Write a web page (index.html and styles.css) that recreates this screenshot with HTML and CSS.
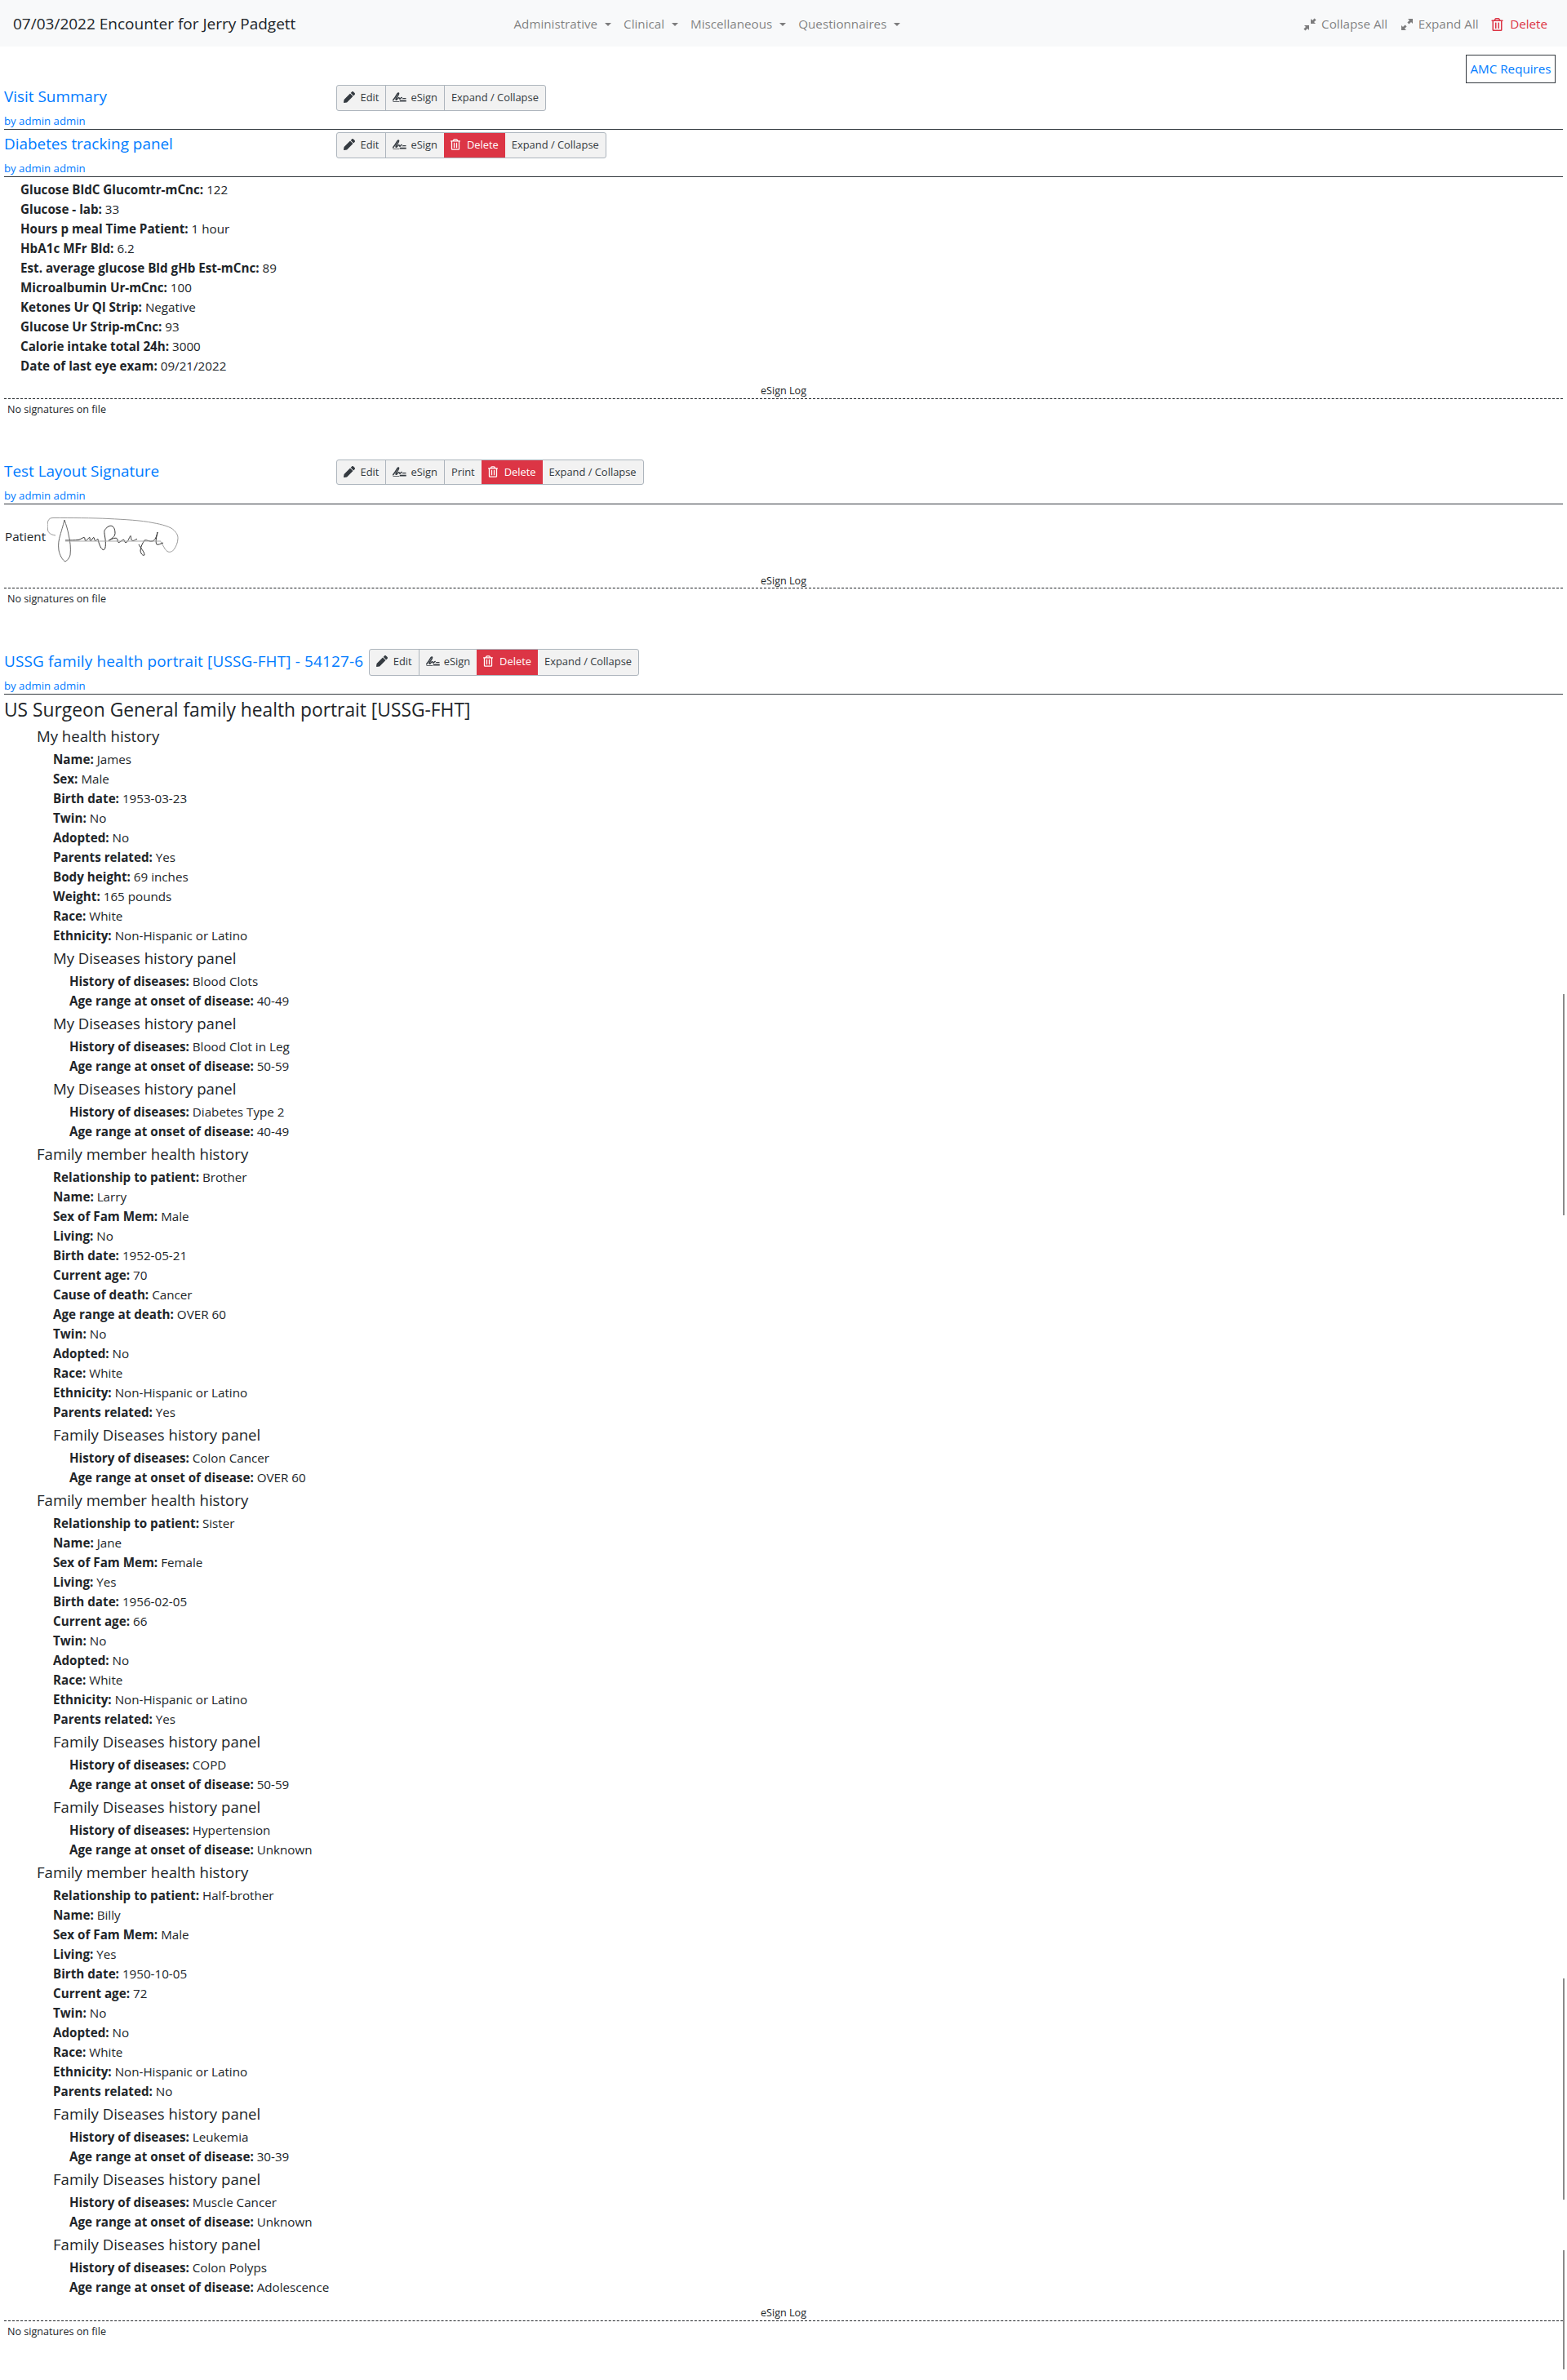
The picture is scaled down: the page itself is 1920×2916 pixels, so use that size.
FILE: index.html
```html
<!DOCTYPE html>
<html lang="en">
<head>
<meta charset="utf-8">
<title>Encounter</title>
<link rel="stylesheet" href="styles.css">
</head>
<body>
<svg class="defs" width="0" height="0">
<symbol id="i-pencil" viewBox="0 0 512 512"><path d="M497.9 142.1l-46.1 46.1c-4.7 4.7-12.3 4.7-17 0l-111-111c-4.7-4.7-4.7-12.3 0-17l46.1-46.1c18.7-18.7 49.1-18.7 67.9 0l60.1 60.1c18.8 18.7 18.8 49.1 0 67.9zM284.2 99.8L21.6 362.4.4 483.9c-2.9 16.4 11.4 30.6 27.8 27.8l121.5-21.3 262.6-262.6c4.7-4.7 4.7-12.3 0-17l-111-111c-4.8-4.7-12.4-4.7-17.1 0z"/></symbol>
<symbol id="i-trash" viewBox="0 0 448 512"><path d="M268 416h24a12 12 0 0 0 12-12V188a12 12 0 0 0-12-12h-24a12 12 0 0 0-12 12v216a12 12 0 0 0 12 12zM432 80h-82.41l-34-56.7A48 48 0 0 0 274.41 0H173.59a48 48 0 0 0-41.16 23.3L98.41 80H16A16 16 0 0 0 0 96v16a16 16 0 0 0 16 16h16v336a48 48 0 0 0 48 48h288a48 48 0 0 0 48-48V128h16a16 16 0 0 0 16-16V96a16 16 0 0 0-16-16zM171.84 50.91A6 6 0 0 1 177 48h94a6 6 0 0 1 5.15 2.91L293.61 80H154.39zM368 464H80V128h288zm-212-48h24a12 12 0 0 0 12-12V188a12 12 0 0 0-12-12h-24a12 12 0 0 0-12 12v216a12 12 0 0 0 12 12z"/></symbol>
<symbol id="i-sign" viewBox="0 0 640 512"><path fill="none" stroke="currentColor" stroke-width="56" stroke-linecap="round" stroke-linejoin="round" d="M24 400C70 340 170 190 210 120c24-42 64-70 74-40 10 34-60 150-112 220-22 32-28 90 4 80 40-14 60-90 110-100 36-6 16 60 46 60 36 0 50-70 90-70"/><path d="M330 400h300v60H330zM20 452h290v32H20z"/><path d="M420 340l60-50 140 0v50z"/></symbol>
<symbol id="i-compress" viewBox="0 0 16 16"><path d="M1 9h6v6L5 13l-2.6 2.6L.4 13.6 3 11zM15 7H9V1l2 2L13.6.4l2 2L13 5z"/></symbol>
<symbol id="i-expand" viewBox="0 0 16 16"><path d="M1 9v6h6L5 13l2.6-2.6-2-2L3 11zM15 7V1H9l2 2L8.4 5.6l2 2L13 5z"/></symbol>
</svg>

<nav class="navbar">
  <span class="brand">07/03/2022 Encounter for Jerry Padgett</span>
  <ul class="menu">
    <li class="menu-item">Administrative<i class="caret"></i></li>
    <li class="menu-item">Clinical<i class="caret"></i></li>
    <li class="menu-item">Miscellaneous<i class="caret"></i></li>
    <li class="menu-item">Questionnaires<i class="caret"></i></li>
  </ul>
  <ul class="actions">
    <li class="action"><svg class="ic"><use href="#i-compress"/></svg>Collapse All</li>
    <li class="action"><svg class="ic"><use href="#i-expand"/></svg>Expand All</li>
    <li class="action action-danger"><svg class="ic ic-trash"><use href="#i-trash"/></svg>Delete</li>
  </ul>
</nav>

<main class="page">
  <div class="amc-row"><a class="amc">AMC Requires</a></div>

  <section class="form form-first">
    <header class="form-head">
      <a class="form-title">Visit Summary</a>
      <div class="btn-group">
        <span class="btn"><svg class="ic ic-pencil"><use href="#i-pencil"/></svg>Edit</span>
        <span class="btn"><svg class="ic ic-sign"><use href="#i-sign"/></svg>eSign</span>
        <span class="btn">Expand / Collapse</span>
      </div>
    </header>
    <a class="by">by admin admin</a>
    <hr class="rule">
  </section>

  <section class="form">
    <header class="form-head">
      <a class="form-title">Diabetes tracking panel</a>
      <div class="btn-group">
        <span class="btn"><svg class="ic ic-pencil"><use href="#i-pencil"/></svg>Edit</span>
        <span class="btn"><svg class="ic ic-sign"><use href="#i-sign"/></svg>eSign</span>
        <span class="btn btn-danger"><svg class="ic ic-trash"><use href="#i-trash"/></svg>Delete</span>
        <span class="btn">Expand / Collapse</span>
      </div>
    </header>
    <a class="by">by admin admin</a>
    <hr class="rule">
    <div class="lvl">
      <p class="row"><b>Glucose BldC Glucomtr-mCnc:</b> 122</p>
      <p class="row"><b>Glucose - lab:</b> 33</p>
      <p class="row"><b>Hours p meal Time Patient:</b> 1 hour</p>
      <p class="row"><b>HbA1c MFr Bld:</b> 6.2</p>
      <p class="row"><b>Est. average glucose Bld gHb Est-mCnc:</b> 89</p>
      <p class="row"><b>Microalbumin Ur-mCnc:</b> 100</p>
      <p class="row"><b>Ketones Ur Ql Strip:</b> Negative</p>
      <p class="row"><b>Glucose Ur Strip-mCnc:</b> 93</p>
      <p class="row"><b>Calorie intake total 24h:</b> 3000</p>
      <p class="row"><b>Date of last eye exam:</b> 09/21/2022</p>
    </div>
    <div class="esign"><span class="esign-label">eSign Log</span><div class="esign-none">No signatures on file</div></div>
  </section>

  <section class="form form-gap">
    <header class="form-head">
      <a class="form-title">Test Layout Signature</a>
      <div class="btn-group">
        <span class="btn"><svg class="ic ic-pencil"><use href="#i-pencil"/></svg>Edit</span>
        <span class="btn"><svg class="ic ic-sign"><use href="#i-sign"/></svg>eSign</span>
        <span class="btn">Print</span>
        <span class="btn btn-danger"><svg class="ic ic-trash"><use href="#i-trash"/></svg>Delete</span>
        <span class="btn">Expand / Collapse</span>
      </div>
    </header>
    <a class="by">by admin admin</a>
    <hr class="rule">
    <div class="sig-row">
      <span class="sig-label">Patient</span>
      <svg class="sig" viewBox="0 0 161 55" fill="none" stroke="#333" stroke-width="1">
        <path stroke="#999" d="M10 22C4 21 1 19 0.5 15 0 10 0 6 1 4 2 1.5 4 .5 7 .5c22 0 48 0 68 1 20 1 40 2 54 5 12 2 22 5 26 9 4 4 5 7 5 10 0 6-3 11-5 14-2 2-5 4-8 2-3-2-5-7-8-12"/>
        <path stroke="#666" d="M21 3c-2 8-4 14-5 18-2 6-3 12-2 19 1 6 5 13 8 14 2-1 5-4 6-8 1-8 0-17-2-25-1-6-3-12-5-18"/>
        <path d="M22 28c6 0 12 0 16-.5 3-.5 5-3 7-3 2 0 0 4 2 4 2 0 3-4 5-4 1 0-1 4 1 4s2-4 4-4c1 0 0 4 2 4 1 0 2-2 3-2 1 5 3 11 6 13 3 1 4-4 3-13-1-7-2-10 0-12 2-3 6-5 8-4 3 1 4 5 4 9 0 4-5 7-8 9 3-2 8-4 10-3 2 1 0 4 2 5 3 0 5-4 7-3 1 1 0 3 2 3 3 0 4-6 6-8 1 2 0 6 3 6 2 0 3-2 5-2"/>
        <path d="M112 33c2 4 7 9 7 13-1 1-4 0-5-5 0-5 3-10 5-13 3-1 6 2 10 1 3-1 5-6 6-11-1 5-3 12-1 15 2 1 5-1 8-2"/>
        <path stroke="#aaa" d="M22 29h117"/>
      </svg>
    </div>
    <div class="esign"><span class="esign-label">eSign Log</span><div class="esign-none">No signatures on file</div></div>
  </section>

  <section class="form form-gap form-tall">
    <header class="form-head">
      <a class="form-title">USSG family health portrait [USSG-FHT] - 54127-6</a>
      <div class="btn-group">
        <span class="btn"><svg class="ic ic-pencil"><use href="#i-pencil"/></svg>Edit</span>
        <span class="btn"><svg class="ic ic-sign"><use href="#i-sign"/></svg>eSign</span>
        <span class="btn btn-danger"><svg class="ic ic-trash"><use href="#i-trash"/></svg>Delete</span>
        <span class="btn">Expand / Collapse</span>
      </div>
    </header>
    <a class="by">by admin admin</a>
    <hr class="rule">
    <h2 class="h-top">US Surgeon General family health portrait [USSG-FHT]</h2>
    <div class="lvl lvl-wide">
      <h3 class="h-sub">My health history</h3>
      <div class="lvl">
        <p class="row"><b>Name:</b> James</p>
        <p class="row"><b>Sex:</b> Male</p>
        <p class="row"><b>Birth date:</b> 1953-03-23</p>
        <p class="row"><b>Twin:</b> No</p>
        <p class="row"><b>Adopted:</b> No</p>
        <p class="row"><b>Parents related:</b> Yes</p>
        <p class="row"><b>Body height:</b> 69 inches</p>
        <p class="row"><b>Weight:</b> 165 pounds</p>
        <p class="row"><b>Race:</b> White</p>
        <p class="row"><b>Ethnicity:</b> Non-Hispanic or Latino</p>
        <h3 class="h-sub">My Diseases history panel</h3>
        <div class="lvl">
          <p class="row"><b>History of diseases:</b> Blood Clots</p>
          <p class="row"><b>Age range at onset of disease:</b> 40-49</p>
        </div>
        <h3 class="h-sub">My Diseases history panel</h3>
        <div class="lvl">
          <p class="row"><b>History of diseases:</b> Blood Clot in Leg</p>
          <p class="row"><b>Age range at onset of disease:</b> 50-59</p>
        </div>
        <h3 class="h-sub">My Diseases history panel</h3>
        <div class="lvl">
          <p class="row"><b>History of diseases:</b> Diabetes Type 2</p>
          <p class="row"><b>Age range at onset of disease:</b> 40-49</p>
        </div>
      </div>
      <h3 class="h-sub">Family member health history</h3>
      <div class="lvl">
        <p class="row"><b>Relationship to patient:</b> Brother</p>
        <p class="row"><b>Name:</b> Larry</p>
        <p class="row"><b>Sex of Fam Mem:</b> Male</p>
        <p class="row"><b>Living:</b> No</p>
        <p class="row"><b>Birth date:</b> 1952-05-21</p>
        <p class="row"><b>Current age:</b> 70</p>
        <p class="row"><b>Cause of death:</b> Cancer</p>
        <p class="row"><b>Age range at death:</b> OVER 60</p>
        <p class="row"><b>Twin:</b> No</p>
        <p class="row"><b>Adopted:</b> No</p>
        <p class="row"><b>Race:</b> White</p>
        <p class="row"><b>Ethnicity:</b> Non-Hispanic or Latino</p>
        <p class="row"><b>Parents related:</b> Yes</p>
        <h3 class="h-sub">Family Diseases history panel</h3>
        <div class="lvl">
          <p class="row"><b>History of diseases:</b> Colon Cancer</p>
          <p class="row"><b>Age range at onset of disease:</b> OVER 60</p>
        </div>
      </div>
      <h3 class="h-sub">Family member health history</h3>
      <div class="lvl">
        <p class="row"><b>Relationship to patient:</b> Sister</p>
        <p class="row"><b>Name:</b> Jane</p>
        <p class="row"><b>Sex of Fam Mem:</b> Female</p>
        <p class="row"><b>Living:</b> Yes</p>
        <p class="row"><b>Birth date:</b> 1956-02-05</p>
        <p class="row"><b>Current age:</b> 66</p>
        <p class="row"><b>Twin:</b> No</p>
        <p class="row"><b>Adopted:</b> No</p>
        <p class="row"><b>Race:</b> White</p>
        <p class="row"><b>Ethnicity:</b> Non-Hispanic or Latino</p>
        <p class="row"><b>Parents related:</b> Yes</p>
        <h3 class="h-sub">Family Diseases history panel</h3>
        <div class="lvl">
          <p class="row"><b>History of diseases:</b> COPD</p>
          <p class="row"><b>Age range at onset of disease:</b> 50-59</p>
        </div>
        <h3 class="h-sub">Family Diseases history panel</h3>
        <div class="lvl">
          <p class="row"><b>History of diseases:</b> Hypertension</p>
          <p class="row"><b>Age range at onset of disease:</b> Unknown</p>
        </div>
      </div>
      <h3 class="h-sub">Family member health history</h3>
      <div class="lvl">
        <p class="row"><b>Relationship to patient:</b> Half-brother</p>
        <p class="row"><b>Name:</b> Billy</p>
        <p class="row"><b>Sex of Fam Mem:</b> Male</p>
        <p class="row"><b>Living:</b> Yes</p>
        <p class="row"><b>Birth date:</b> 1950-10-05</p>
        <p class="row"><b>Current age:</b> 72</p>
        <p class="row"><b>Twin:</b> No</p>
        <p class="row"><b>Adopted:</b> No</p>
        <p class="row"><b>Race:</b> White</p>
        <p class="row"><b>Ethnicity:</b> Non-Hispanic or Latino</p>
        <p class="row"><b>Parents related:</b> No</p>
        <h3 class="h-sub">Family Diseases history panel</h3>
        <div class="lvl">
          <p class="row"><b>History of diseases:</b> Leukemia</p>
          <p class="row"><b>Age range at onset of disease:</b> 30-39</p>
        </div>
        <h3 class="h-sub">Family Diseases history panel</h3>
        <div class="lvl">
          <p class="row"><b>History of diseases:</b> Muscle Cancer</p>
          <p class="row"><b>Age range at onset of disease:</b> Unknown</p>
        </div>
        <h3 class="h-sub">Family Diseases history panel</h3>
        <div class="lvl">
          <p class="row"><b>History of diseases:</b> Colon Polyps</p>
          <p class="row"><b>Age range at onset of disease:</b> Adolescence</p>
        </div>
      </div>
    </div>
    <div class="esign esign-last"><span class="esign-label">eSign Log</span><div class="esign-none">No signatures on file</div></div>
  </section>
</main>

<div class="sb sb-1"></div>
<div class="sb sb-2"></div>
<div class="sb sb-3"></div>
</body>
</html>
```
FILE: styles.css
```css
* { box-sizing: border-box; }
html, body { margin: 0; padding: 0; }
body {
  position: relative;
  height: 2916px;
  overflow: hidden;
  background: #fff;
  color: #212529;
  font-family: "Open Sans", "Noto Sans", sans-serif;
  font-size: 15.2px;
  line-height: 24px;
}
.defs { position: absolute; }
a { color: #007bff; }
.ic { width: 16px; height: 16px; fill: currentColor; margin-right: 6px; vertical-align: -3px; }
.ic-trash { width: 15px; margin-right: 8px; }

.navbar {
  height: 57px;
  background: #f8f9fa;
  display: flex;
  align-items: center;
  padding: 0 24px 0 16px;
}
.brand { font-size: 19px; width: 613.5px; white-space: nowrap; }
.menu, .actions { list-style: none; margin: 0; padding: 0; display: flex; color: rgba(0,0,0,.5); }
.menu { flex: 1; gap: 15.5px; }
.actions { gap: 15.5px; }
.menu-item, .action { white-space: nowrap; }
.caret {
  display: inline-block;
  margin-left: 8.5px;
  vertical-align: 3px;
  border-top: 4.5px solid;
  border-left: 4px solid transparent;
  border-right: 4px solid transparent;
}
.action-danger { color: #dc3545; }

.page { padding: 0 5px; }
.amc-row { display: flex; justify-content: flex-end; padding: 10px 9px 0 0; height: 47px; }
.amc { border: 1px solid #343a40; height: 35px; width: 110px; text-align: center; line-height: 33px; white-space: nowrap; }

.form-head { display: flex; align-items: center; height: 31.5px; }
.form-title { font-size: 18.9px; min-width: 400px; margin-right: 6.5px; padding-bottom: 3px; white-space: nowrap; }
.form-first { margin-bottom: .5px; }
.form-gap { margin-top: 52px; }
.form-tall .form-head { height: 32.5px; }
.form-tall .form-title { letter-spacing: .18px; }
.by { display: block; font-size: 13.2px; line-height: 18px; margin-top: 3.5px; }
.rule { border: 0; border-top: 1px solid #343a40; margin: 1px 0 3px; }

.btn-group { display: flex; border: 1px solid #adb5bd; border-radius: 3px; background: #f2f2f2; font-size: 12.9px; line-height: 29.5px; height: 100%; }
.btn { padding: 0 8px; border-left: 1px solid #adb5bd; color: #343a40; white-space: nowrap; }
.btn:first-child { border-left: 0; }
.btn .ic { height: 14px; vertical-align: -2px; }
.btn .ic-pencil { width: 14px; margin-right: 7px; }
.btn .ic-sign { width: 17px; margin-right: 5px; }
.btn .ic-trash { width: 12px; margin-right: 8px; }
.btn-danger { background: #dc3545; color: #fff; border-left: 0; }
.btn-danger + .btn { border-left: 0; }

.lvl { margin-left: 20px; }
.lvl-wide { margin-left: 40px; }
.row { margin: 0; line-height: 24px; white-space: nowrap; }
.row b { font-weight: 700; }
.h-top { margin: 0; font-size: 22.8px; font-weight: 400; line-height: 32px; }
.h-sub { margin: 0; font-size: 18.6px; font-weight: 400; line-height: 32px; }

.esign { text-align: center; margin-top: 11px; }
.esign-last { margin-top: 12px; }
.esign-label { display: block; font-size: 12.6px; line-height: 16px; margin-bottom: .5px; }
.esign-none { border-top: 1px dashed #212529; text-align: left; padding: 4px 4px 0; font-size: 12.6px; line-height: 18px; }

.sig-row { display: flex; align-items: flex-start; height: 72px; margin-top: 3px; }
.sig-label { margin: 24px 0 0 1px; width: 52px; }
.sig { width: 161px; height: 55px; margin-top: 13px; }

.sb { position: absolute; left: 1915px; width: 2px; background: #8a8a8a; }
.sb-1 { top: 1218px; height: 271px; }
.sb-2 { top: 2424px; height: 271px; }
.sb-3 { top: 2757px; height: 146px; }
```
